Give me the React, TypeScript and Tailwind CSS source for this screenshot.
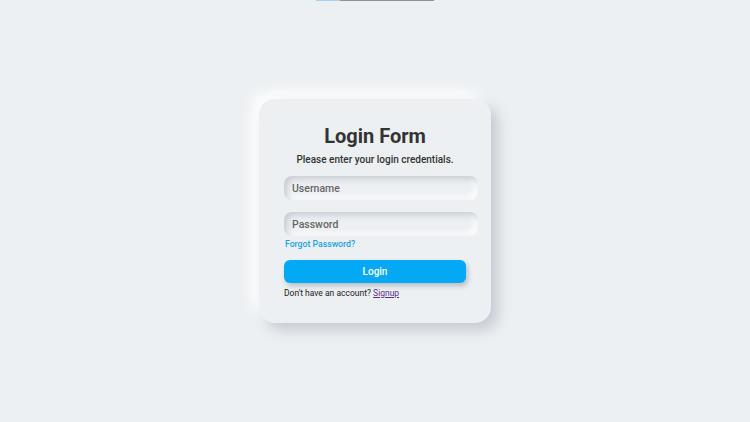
export default function App() {
  return (
    <div className="relative w-full min-h-[422px] h-screen bg-[#ecf0f3] flex items-center justify-center font-['Roboto',sans-serif]">
      {/* thin top indicator */}
      <div className="absolute top-0 left-[316px] flex h-[1px] w-[118px]">
        <div className="w-[24px] bg-[#9fd3f0]" />
        <div className="flex-1 bg-[#8f9295]" />
      </div>

      <div className="w-[232px] h-[224px] rounded-[16px] bg-[#ecf0f3] shadow-[7px_7px_14px_#c5cad3,-7px_-7px_14px_#ffffff] flex flex-col pt-[23px] pl-[25px] pr-[13px]">
        <h1 className="text-[20px] leading-[28px] font-bold text-[#333333] text-center pr-[12px]">Login Form</h1>
        <p className="mt-[3px] text-[10px] leading-[14px] font-medium text-[#333333] text-center pr-[12px]">
          Please enter your login credentials.
        </p>
        <input
          placeholder="Username"
          className="mt-[9px] w-[194px] h-[24px] rounded-[8px] bg-[#ecf0f3] px-[8px] text-[10.5px] font-medium outline-none placeholder:text-[#666666] shadow-[inset_3px_3px_6px_#c8ccd3,inset_-3px_-3px_6px_#ffffff]"
        />
        <input
          placeholder="Password"
          type="password"
          className="mt-[12px] w-[194px] h-[24px] rounded-[8px] bg-[#ecf0f3] px-[8px] text-[10.5px] font-medium outline-none placeholder:text-[#666666] shadow-[inset_3px_3px_6px_#c8ccd3,inset_-3px_-3px_6px_#ffffff]"
        />
        <a className="mt-[2px] ml-[1px] text-[8.7px] leading-[12px] font-medium text-[#1aa3df] cursor-pointer">Forgot Password?</a>
        <button className="mt-[10px] w-[182px] h-[23px] rounded-[6px] bg-[#03a9f4] text-white text-[10px] font-medium shadow-[2px_3px_5px_#b9bec7]">
          Login
        </button>
        <p className="mt-[4px] text-[8.5px] leading-[12px] text-[#222222]">
          Don't have an account? <a className="text-[#5b2d8e] underline cursor-pointer">Signup</a>
        </p>
      </div>
    </div>
  );
}
